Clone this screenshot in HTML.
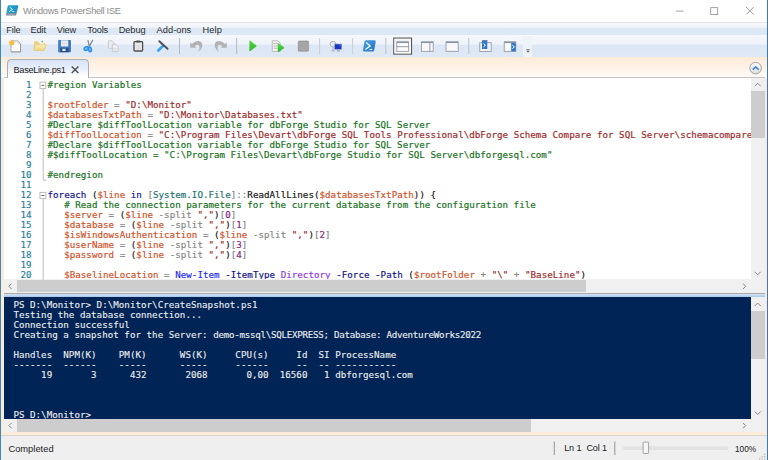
<!DOCTYPE html>
<html>
<head>
<meta charset="utf-8">
<title>Windows PowerShell ISE</title>
<style>
html,body{margin:0;padding:0;}
body{width:768px;height:460px;overflow:hidden;background:#fff;position:relative;font-family:"Liberation Sans",sans-serif;}
.abs{position:absolute;}
#win{position:absolute;left:0;top:0;width:768px;height:460px;overflow:hidden;background:#fff;}
#lborder{left:0;top:0;width:1.100px;height:460px;background:#4088b0;}
#rborder{left:766.500px;top:0;width:1.500px;height:460px;background:#3f79b0;}
#title{left:23px;top:4.900px;font-size:9.200px;letter-spacing:-0.275px;line-height:12px;color:#8a8a8a;white-space:nowrap;}
#menubar{left:1px;top:21.600px;width:766px;height:13.900px;background:linear-gradient(#f6f9fc 0,#f0f4fa 40%,#dee8f5 44%,#dde7f5 100%);border-top:1px solid #e4e4e4;box-sizing:border-box;}
.menu{position:absolute;top:23.600px;font-size:9.250px;line-height:12px;color:#2c2c2c;white-space:nowrap;letter-spacing:-0.150px;}
#toolbar{left:1px;top:35.400px;width:766px;height:21.500px;background:linear-gradient(#f5f8fc 0,#eff4fa 42%,#dde7f5 45%,#dfe8f5 100%);}
#tabstrip{left:1px;top:56.800px;width:766px;height:21.200px;background:linear-gradient(#fdebd9 0,#fef2e6 50%,#fffcf9 100%);}
#framebg{left:1px;top:78px;width:766px;height:358px;background:#fdebd9;}
#tab{left:7px;top:59.200px;width:81.700px;height:18.800px;box-sizing:border-box;border:1px solid #a9aeb6;border-bottom:none;border-radius:4.500px 4.500px 0 0;background:linear-gradient(#d8e4f7 0,#e6eefa 45%,#ffffff 88%);}
#tabtext{left:13.500px;top:63.700px;font-size:9.200px;letter-spacing:-0.300px;line-height:12px;color:#222;white-space:nowrap;}
#editor{left:3.500px;top:78px;width:747.500px;height:202px;background:#fff;overflow:hidden;}
#edtop{left:3.500px;top:77px;width:761.400px;height:1px;background:#c4c4c4;}
.mono{font-family:"DejaVu Sans Mono","Liberation Mono",monospace;font-size:9.19px;line-height:10px;white-space:pre;letter-spacing:0.027px;-webkit-text-stroke:0.170px;}
#lnums{left:0;top:79.3px;width:27.600px;text-align:right;color:#2a7f9c;}
#code{left:48px;top:79.3px;color:#151515;}
.c{color:#16701a}.v{color:#cf4f26}.s{color:#9a2828}.k{color:#101096}.t{color:#1a7272}.o{color:#858585}.cm{color:#1c28f0}.p{color:#10108a}.a{color:#9038e2}.n{color:#861a86}
.sb{background:#f0f0f0;}
.thumb{background:#cdcdcd;}
#console{left:3.700px;top:297px;width:747.300px;height:121.900px;background:#012456;overflow:hidden;}
#context{left:9.700px;top:1.3px;color:#eeeeee;-webkit-text-stroke:0.120px;}
#status{left:1px;top:435px;width:766px;height:25px;background:#efefef;border-top:0.700px solid #ddd5cc;box-sizing:border-box;}
.st{position:absolute;font-size:9.2px;line-height:12px;color:#222;white-space:nowrap;}
</style>
</head>
<body>
<div id="win">
  <svg class="abs" style="left:0;top:0" width="768" height="22" viewBox="0 0 768 22">
    <defs><linearGradient id="gTi" x1="0" y1="0" x2="1" y2="0"><stop offset="0" stop-color="#23a3cd"/><stop offset="1" stop-color="#1c93c2"/></linearGradient></defs>
    <path d="M8.300 5.300h9.400q0.800 0 0.600 0.800l-1.700 6.800h-10.200l1.300-6.900q0.100-0.700 0.600-0.700z" fill="url(#gTi)"/>
    <path d="M6.400 12.900h10.200l-0.500 2q-0.200 0.600-0.800 0.600h-8.700q-0.700 0-0.600-0.700z" fill="#6f8190"/>
    <path d="M7.200 14.200h8" stroke="#c9d3da" stroke-width="0.7"/>
    <path d="M10 7.400l2.500 2-3 2" fill="none" stroke="#fff" stroke-width="0.9" stroke-linecap="round" stroke-linejoin="round"/>
    <path d="M12.300 11.500h2" stroke="#fff" stroke-width="0.8"/>
    <path d="M676 11.100h7.600" stroke="#8a8a8a" stroke-width="0.800"/>
    <rect x="710.700" y="7.700" width="7" height="6.700" fill="none" stroke="#8a8a8a" stroke-width="0.800"/>
    <path d="M746.200 7.100l7.400 7.400M753.600 7.100l-7.400 7.400" stroke="#808080" stroke-width="0.800"/>
  </svg>
  <div class="abs" id="title">Windows PowerShell ISE</div>
  <div class="abs" id="menubar"></div>
  <div class="abs" id="toolbar"></div>
  <div class="abs" id="tabstrip"></div>
  <div class="abs" id="framebg"></div>
  <div class="menu" style="left:6.300px">File</div>
  <div class="menu" style="left:30.600px">Edit</div>
  <div class="menu" style="left:56.800px">View</div>
  <div class="menu" style="left:87.200px">Tools</div>
  <div class="menu" style="left:118.700px;letter-spacing:-0.080px">Debug</div>
  <div class="menu" style="left:156.600px;letter-spacing:0.030px">Add-ons</div>
  <div class="menu" style="left:202.500px;letter-spacing:0.100px">Help</div>


  <svg class="abs" style="left:0;top:36px" width="768" height="22" viewBox="0 36 768 22">
    <defs>
      <linearGradient id="gFold" x1="0" y1="0" x2="0" y2="1"><stop offset="0" stop-color="#fbf0be"/><stop offset="1" stop-color="#efd37c"/></linearGradient>
      <linearGradient id="gPS" x1="0" y1="0" x2="1" y2="1"><stop offset="0" stop-color="#4aa3e0"/><stop offset="1" stop-color="#1f6fc0"/></linearGradient>
      <linearGradient id="gGreen" x1="0" y1="0" x2="0" y2="1"><stop offset="0" stop-color="#58d64a"/><stop offset="1" stop-color="#2fb52a"/></linearGradient>
    </defs>
    <!-- overflow bg -->
    <rect x="523" y="36" width="9" height="21" fill="#eef3fa"/>
    <!-- new -->
    <path d="M11 40.900h6.800l2.700 2.700v8.200h-9.500z" fill="#fcfcfc" stroke="#a8a8a8" stroke-width="0.900"/>
    <path d="M11 52h9.600M20.600 44v8" fill="none" stroke="#8f8f8f" stroke-width="0.700"/>
    <path d="M17.700 41v2.700h2.700" fill="none" stroke="#c0c0c0" stroke-width="0.600"/>
    <path d="M11.700 39.600l0.800 1.300 1.500-0.400-0.400 1.500 1.300 0.800-1.300 0.800 0.400 1.500-1.500-0.400-0.800 1.300-0.800-1.300-1.500 0.400 0.400-1.500-1.300-0.800 1.300-0.800-0.400-1.500 1.500 0.400z" fill="#f8b62e"/>
    <circle cx="11.700" cy="42.600" r="1.900" fill="#f9bd3c"/>
    <!-- open -->
    <path d="M33.8 42.2q0-1 1-1h3.2l1 1.2h5q1 0 1 1v6.2h-11.2z" fill="#ead287"/>
    <path d="M35.6 44.6h10.2q0.8 0 0.5 0.8l-1.9 4.4q-0.3 0.7-1 0.7h-9.2q-0.8 0-0.5-0.8z" fill="url(#gFold)" stroke="#dcb655" stroke-width="0.500"/>
    <path d="M39.500 41.600h4.300v2.800h-4.300z" fill="#f7f3e2"/><circle cx="42.200" cy="41.600" r="0.800" fill="#4aa6b8"/>
    <!-- save -->
    <rect x="58.300" y="39.900" width="12.600" height="12.300" rx="0.800" fill="#3c72bd"/>
    <rect x="58.300" y="39.900" width="1.600" height="12.300" fill="#4c86cc"/>
    <rect x="60.900" y="40.300" width="7.400" height="6.200" fill="#f1f2f3"/>
    <path d="M61.500 42h6.200M61.500 43.400h6.200M61.500 44.800h6.200" stroke="#c9ccd2" stroke-width="0.500"/>
    <rect x="60.400" y="48.200" width="8.200" height="4" fill="#2a4c86"/>
    <rect x="62.300" y="48.800" width="3.300" height="2.200" fill="#e4e9f0"/>
    <!-- cut -->
    <path d="M88 40.400l1.400 6.400M92.600 40.300l-3.300 6.600" stroke="#87919b" stroke-width="1.400" stroke-linecap="round" fill="none"/>
    <ellipse cx="86.300" cy="48.500" rx="2.300" ry="1.700" transform="rotate(-35 86.3 48.500)" fill="#7cc4f5" stroke="#2b90e2" stroke-width="1.500"/>
    <ellipse cx="89.900" cy="49.500" rx="1.500" ry="2.200" transform="rotate(-12 89.900 49.500)" fill="#7cc4f5" stroke="#2b90e2" stroke-width="1.500"/>
    <!-- copy (disabled) -->
    <path d="M108.5 40.7h3.6l2 2v5.6h-5.6z" fill="#e9ebee" stroke="#c3c6ca" stroke-width="0.8"/>
    <path d="M112.4 44.3h3.6l2 2v5.4h-5.6z" fill="#eceef1" stroke="#bfc2c6" stroke-width="0.8"/>
    <path d="M113.6 48.6h3M113.6 50h3" stroke="#cfd2d6" stroke-width="0.5"/>
    <!-- paste -->
    <rect x="134" y="41.6" width="8.6" height="9.4" rx="0.8" fill="#ececec" stroke="#4e4e4e" stroke-width="1.3"/>
    <rect x="136.2" y="40.4" width="4.2" height="2.2" rx="0.6" fill="#4e4e4e"/>
    <path d="M135.6 45.2h5.4M135.6 47h5.4M135.6 48.8h5.4" stroke="#c2c2c2" stroke-width="0.5"/>
    <!-- clear (squeegee) -->
    <path d="M163 45.800l-4.700 4.700" stroke="#36a2ea" stroke-width="2.600" stroke-linecap="round"/>
    <path d="M159.3 41.2l8.2 7.6" stroke="#4a4f55" stroke-width="1.9" stroke-linecap="round"/>
    <!-- sep -->
    <path d="M179.5 38v16" stroke="#a9b2bd" stroke-width="0.9"/>
    <!-- undo -->
    <path d="M190.200 47.800v-5.400l1.700 1.500q4.400-4.200 8.400-2.500q3 1.800 1.600 5.800q-1.200 3-3.700 4.900q2-3.700 1-6.300q-1.200-2.100-4.500 0.400l1.700 1.600z" fill="#b2b2b2"/>
    <!-- redo -->
    <path d="M226.800 47.800v-5.400l-1.700 1.500q-4.400-4.200-8.400-2.500q-3 1.800-1.600 5.800q1.200 3 3.700 4.900q-2-3.700-1-6.300q1.200-2.100 4.500 0.400l-1.700 1.600z" fill="#b2b2b2"/>
    <!-- sep -->
    <path d="M236.7 38v16" stroke="#a9b2bd" stroke-width="0.9"/>
    <!-- run -->
    <path d="M249.4 41.300q0-1.100 1-0.500l5.800 4.500q0.700 0.600 0 1.200l-5.800 4.600q-1 0.600-1-0.500z" fill="url(#gGreen)"/>
    <!-- run selection -->
    <path d="M272.300 40.800h5.600l2.300 2.300v8.200h-7.900z" fill="#fbfbfb" stroke="#a8a8a8" stroke-width="0.800"/>
    <path d="M273.500 43.500h5M273.500 45.200h5M273.500 46.900h5M273.500 48.600h5" stroke="#9c9c9c" stroke-width="0.600"/>
    <path d="M277.800 43.900q0-1.100 0.900-0.500l5.100 3.600q0.700 0.600 0 1.200l-5.100 3.700q-0.900 0.600-0.900-0.500z" fill="url(#gGreen)"/>
    <!-- stop -->
    <rect x="298.200" y="40.900" width="10.400" height="10.400" rx="0.900" fill="#9b9b9b"/>
    <rect x="299" y="41.700" width="8.800" height="8.800" rx="0.500" fill="#a6a6a6"/>
    <rect x="298.200" y="40.900" width="10.400" height="10.400" rx="0.900" fill="none" stroke="#8c8c8c" stroke-width="0.500"/>
    <!-- sep -->
    <path d="M319.600 38v16" stroke="#c3cad5" stroke-width="0.900"/>
    <!-- remote -->
    <circle cx="333.100" cy="44.200" r="2.900" fill="#e6ecf0" stroke="#a3adb6" stroke-width="0.900"/>
    <path d="M333 47.200v3.400M331.400 50.800h3.200" stroke="#98a2ab" stroke-width="0.800"/>
    <rect x="334.700" y="44" width="7" height="5.300" fill="#1838cc" stroke="#9aa4b4" stroke-width="0.600"/>
    <path d="M338.500 44.300h3v3z" fill="#4a6ae0"/>
    <path d="M336.800 50.900h3.200" stroke="#8e98a4" stroke-width="1"/>
    <!-- sep -->
    <path d="M352.600 38v16" stroke="#c3cad5" stroke-width="0.900"/>
    <!-- PS icon -->
    <path d="M366 40.300h8.400q1.600 0 1.300 1.600l-1.500 8q-0.300 1.600-1.900 1.600h-8q-1.600 0-1.300-1.600l1.400-8q0.300-1.600 1.600-1.600z" fill="url(#gPS)"/>
    <path d="M366.700 43l3.500 2.900-4.300 3.200" fill="none" stroke="#fff" stroke-width="1.300" stroke-linecap="round" stroke-linejoin="round"/>
    <path d="M369.500 49.500h2.800" stroke="#fff" stroke-width="1.100"/>
    <!-- sep -->
    <path d="M385.800 38v16" stroke="#b4bcc7" stroke-width="0.900"/>
    <!-- pane selected -->
    <rect x="393.800" y="38.100" width="17.700" height="16" fill="#f2f2f2" stroke="#5a5a5a" stroke-width="1.200"/>
    <rect x="394.900" y="39.200" width="15.500" height="13.800" fill="none" stroke="#fbfbfb" stroke-width="0.800"/>
    <rect x="396.800" y="41.800" width="11.600" height="9.500" fill="#fafafa" stroke="#8b93a0" stroke-width="0.800"/>
    <path d="M396.800 42.400h11.600" stroke="#8792a3" stroke-width="1.300"/>
    <path d="M396.800 46.700h11.600" stroke="#8b93a0" stroke-width="0.900"/>
    <!-- pane 2 -->
    <rect x="421.400" y="41.800" width="11.800" height="9.500" fill="#f8f8f8" stroke="#8b93a0" stroke-width="0.800"/>
    <path d="M421.400 42.400h11.800" stroke="#8792a3" stroke-width="1.300"/>
    <path d="M429.900 42v9.300" stroke="#8b93a0" stroke-width="0.900"/>
    <!-- pane 3 -->
    <rect x="446" y="41.800" width="12.200" height="9.500" fill="#f8f8f8" stroke="#8b93a0" stroke-width="0.800"/>
    <path d="M446 42.400h12.200" stroke="#8792a3" stroke-width="1.300"/>
    <!-- sep -->
    <path d="M468.800 38v16" stroke="#b4bcc7" stroke-width="0.900"/>
    <!-- show command window -->
    <rect x="479.800" y="42.700" width="11.400" height="8.700" fill="#f3f3f3" stroke="#8b93a0" stroke-width="0.800"/>
    <rect x="482" y="40.200" width="5.300" height="8.800" fill="#2f78c8"/>
    <path d="M482 40.500h5.300" stroke="#7a8494" stroke-width="1"/>
    <path d="M483.500 43.600l2 1.600-2 1.700" fill="none" stroke="#fff" stroke-width="1"/>
    <!-- show command addon -->
    <rect x="504.200" y="41.800" width="11.600" height="9.500" fill="#f8f8f8" stroke="#8b93a0" stroke-width="0.800"/>
    <path d="M504.200 42.400h11.600" stroke="#8792a3" stroke-width="1.300"/>
    <rect x="511.200" y="43" width="4.600" height="8.300" fill="#2f78c8"/>
    <path d="M512.400 45.200l2 1.700-2 1.700" fill="none" stroke="#fff" stroke-width="1"/>
    <!-- overflow chevron -->
    <path d="M526.200 49.600h3.600" stroke="#666" stroke-width="0.800"/>
    <path d="M526.200 50.800h3.600l-1.800 1.900z" fill="#666"/>
  </svg>
  <div class="abs" id="edtop"></div>
  <div class="abs" id="tab"></div>
  <div class="abs" id="tabtext">BaseLine.ps1</div>

  <svg class="abs" style="left:0;top:57px" width="768" height="21" viewBox="0 57 768 21">
    <defs><linearGradient id="gCir" x1="0" y1="0" x2="0" y2="1"><stop offset="0" stop-color="#ffffff"/><stop offset="1" stop-color="#dcdcdc"/></linearGradient></defs>
    <path d="M71.700 66.600l6.700 6.300M78.400 66.600l-6.700 6.300" stroke="#4c4c4c" stroke-width="1.400"/>
    <circle cx="755.600" cy="68.100" r="5.800" fill="url(#gCir)" stroke="#a2a2a2" stroke-width="1"/>
    <path d="M752.700 69.700l3-2.900 3 2.900" fill="none" stroke="#4384d6" stroke-width="1.600" stroke-linejoin="miter"/>
  </svg>
  <div class="abs" id="editor">
    <div class="abs mono" id="lnums" style="left:0.500px;top:2.300px">1
2
3
4
5
6
7
8
9
10
11
12
13
14
15
16
17
18
19
20</div>
    <div class="abs mono" id="code" style="left:44px;top:2.300px"><span class="c">#region Variables</span>

<span class="v">$rootFolder</span> <span class="o">=</span> <span class="s">"D:\Monitor"</span>
<span class="v">$databasesTxtPath</span> <span class="o">=</span> <span class="s">"D:\Monitor\Databases.txt"</span>
<span class="c">#Declare $diffToolLocation variable for dbForge Studio for SQL Server</span>
<span class="v">$diffToolLocation</span> <span class="o">=</span> <span class="s">"C:\Program Files\Devart\dbForge SQL Tools Professional\dbForge Schema Compare for SQL Server\schemacompare.com"</span>
<span class="c">#Declare $diffToolLocation variable for dbForge Studio for SQL Server</span>
<span class="c">#$diffToolLocation = "C:\Program Files\Devart\dbForge Studio for SQL Server\dbforgesql.com"</span>

<span class="c">#endregion</span>

<span class="k">foreach</span> (<span class="v">$line</span> <span class="k">in</span> <span class="o">[</span><span class="t">System.IO.File</span><span class="o">]</span><span class="o">::</span>ReadAllLines(<span class="v">$databasesTxtPath</span>)) {
   <span class="c"># Read the connection parameters for the current database from the configuration file</span>
   <span class="v">$server</span> <span class="o">=</span> (<span class="v">$line</span> <span class="o">-split</span> <span class="s">","</span>)<span class="o">[</span><span class="n">0</span><span class="o">]</span>
   <span class="v">$database</span> <span class="o">=</span> (<span class="v">$line</span> <span class="o">-split</span> <span class="s">","</span>)<span class="o">[</span><span class="n">1</span><span class="o">]</span>
   <span class="v">$isWindowsAuthentication</span> <span class="o">=</span> (<span class="v">$line</span> <span class="o">-split</span> <span class="s">","</span>)<span class="o">[</span><span class="n">2</span><span class="o">]</span>
   <span class="v">$userName</span> <span class="o">=</span> (<span class="v">$line</span> <span class="o">-split</span> <span class="s">","</span>)<span class="o">[</span><span class="n">3</span><span class="o">]</span>
   <span class="v">$password</span> <span class="o">=</span> (<span class="v">$line</span> <span class="o">-split</span> <span class="s">","</span>)<span class="o">[</span><span class="n">4</span><span class="o">]</span>

   <span class="v">$BaselineLocation</span> <span class="o">=</span> <span class="cm">New-Item</span> <span class="p">-ItemType</span> <span class="a">Directory</span> <span class="p">-Force</span> <span class="p">-Path</span> (<span class="v">$rootFolder</span> <span class="o">+</span> <span class="s">"\"</span> <span class="o">+</span> <span class="s">"BaseLine"</span>)</div>
  </div>

  <div class="abs" id="console">
    <div class="abs mono" id="context" style="top:3.100px">PS D:\Monitor&gt; D:\Monitor\CreateSnapshot.ps1
Testing the database connection...
Connection successful
Creating a snapshot for the Server: <span style="letter-spacing:-0.270px">demo-mssql\SQLEXPRESS; Database: AdventureWorks2022</span>

Handles  NPM(K)    PM(K)      WS(K)     CPU(s)     Id  SI ProcessName
-------  ------    -----      -----     ------     --  -- -----------
     19       3      432       2068       0,00  16560   1 dbforgesql.com



PS D:\Monitor&gt; </div>
  </div>

  <div class="abs" id="status"></div>
  <!-- editor scrollbars -->
  <div class="abs sb" style="left:751px;top:78px;width:13.900px;height:215px"></div>
  <div class="abs thumb" style="left:751.300px;top:91.200px;width:13.400px;height:46.600px"></div>
  <div class="abs sb" style="left:3.500px;top:279.300px;width:747.500px;height:13.600px"></div>
  <div class="abs thumb" style="left:17.100px;top:279.500px;width:568.700px;height:12.900px"></div>
  <!-- splitter -->
  <div class="abs" style="left:3.500px;top:292.900px;width:761.400px;height:1px;background:#a8a8a8"></div>
  <div class="abs" style="left:3.500px;top:293.900px;width:761.400px;height:3.200px;background:linear-gradient(#d6e6f7,#a6c6ea)"></div>
  <!-- console scrollbars -->
  <div class="abs sb" style="left:751px;top:296.900px;width:13.900px;height:135.200px"></div>
  <div class="abs thumb" style="left:751.300px;top:310.800px;width:13.400px;height:48.200px"></div>
  <div class="abs sb" style="left:3.500px;top:418.700px;width:747.500px;height:13.400px"></div>
  <div class="abs thumb" style="left:17.100px;top:418.900px;width:513.500px;height:13px"></div>
  <svg class="abs" style="left:0;top:78px" width="768" height="382" viewBox="0 78 768 382">
    <g fill="none" stroke="#7e7e7e" stroke-width="0.950">
      <path d="M754.700 86.200l3-3 3 3"/>
      <path d="M754.700 271.800l3 3 3-3"/>
      <path d="M11.600 283.600l-2.700 2.700 2.700 2.700"/>
      <path d="M743 283.600l2.700 2.700-2.700 2.700"/>
      <path d="M754.700 306l3-3 3 3"/>
      <path d="M754.700 411.500l3 3 3-3"/>
      <path d="M11.600 422.900l-2.700 2.700 2.700 2.700"/>
      <path d="M743 422.900l2.700 2.700-2.700 2.700"/>
    </g>
    <!-- fold markers -->
    <g fill="none" stroke="#b4b4b4" stroke-width="0.9">
      <rect x="40" y="82.200" width="5.800" height="6.200" fill="#fff"/>
      <path d="M41.400 85.300h3" stroke="#555"/>
      <path d="M43.200 88.600v91.600h3"/>
      <rect x="40" y="192.400" width="5.800" height="6.200" fill="#fff"/>
      <path d="M41.400 195.500h3" stroke="#555"/>
      <path d="M43.200 198.800v81"/>
    </g>
    <!-- status bar -->
    <path d="M554.300 441.500v13.500M614.800 441.500v13.500" stroke="#8a8a8a" stroke-width="0.9"/>
    <rect x="623.800" y="446.900" width="104" height="2.300" fill="#e4e4e4" stroke="#d6d6d6" stroke-width="0.500"/>
    <rect x="643.100" y="442.100" width="5.500" height="11.400" rx="0.600" fill="#f6f6f6" stroke="#9a9a9a" stroke-width="0.900"/>
    <g fill="#b8b8b8">
      <rect x="764" y="456" width="1.300" height="1.300"/><rect x="761.500" y="458.300" width="1.300" height="1.300"/><rect x="764" y="458.300" width="1.300" height="1.300"/><rect x="764" y="453.700" width="1.300" height="1.300"/><rect x="761.500" y="456" width="1.300" height="1.300"/><rect x="759" y="458.300" width="1.300" height="1.300"/>
    </g>
  </svg>
  <div class="st" style="left:8.400px;top:443px;font-size:9.350px">Completed</div>
  <div class="st" style="left:564.200px;top:442px;font-size:9.100px;letter-spacing:-0.220px;word-spacing:0.300px">Ln 1&nbsp; Col 1</div>
  <div class="st" style="left:735px;top:443px;font-size:8.3px">100%</div>

  <div class="abs" id="lborder"></div>
  <div class="abs" id="rborder"></div>
</div>
</body>
</html>
